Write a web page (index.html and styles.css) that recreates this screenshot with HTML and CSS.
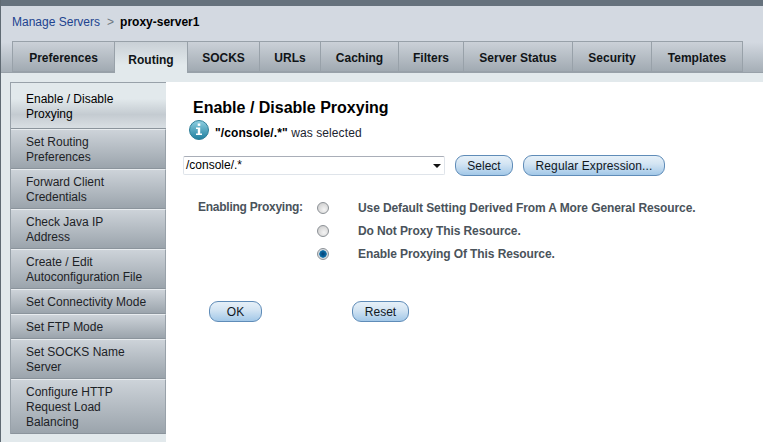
FILE: index.html
```html
<!DOCTYPE html>
<html lang="en">
<head>
    <meta charset="UTF-8">
    <title>Routing - proxy-server1</title>
    <link rel="stylesheet" href="styles.css">
</head>
<body>
    <div class="topbar"></div>
    <div class="header">
        <div class="breadcrumb">
            <a href="#">Manage Servers</a>
            <span class="sep">&gt;</span>
            <b>proxy-server1</b>
        </div>
        <div class="tabs">
            <a class="tab tab-pref" href="#">Preferences</a>
            <a class="tab tab-routing active" href="#">Routing</a>
            <a class="tab tab-socks" href="#">SOCKS</a>
            <a class="tab tab-urls" href="#">URLs</a>
            <a class="tab tab-caching" href="#">Caching</a>
            <a class="tab tab-filters" href="#">Filters</a>
            <a class="tab tab-status" href="#">Server Status</a>
            <a class="tab tab-security" href="#">Security</a>
            <a class="tab tab-templates" href="#">Templates</a>
        </div>
    </div>
    <div class="main">
        <div class="sidebar">
            <a class="side-item active" href="#">Enable / Disable Proxying</a>
            <a class="side-item" href="#">Set Routing Preferences</a>
            <a class="side-item" href="#">Forward Client Credentials</a>
            <a class="side-item" href="#">Check Java IP Address</a>
            <a class="side-item" href="#">Create / Edit Autoconfiguration File</a>
            <a class="side-item" href="#">Set Connectivity Mode</a>
            <a class="side-item" href="#">Set FTP Mode</a>
            <a class="side-item" href="#">Set SOCKS Name Server</a>
            <a class="side-item" href="#">Configure HTTP Request Load Balancing</a>
        </div>
        <div class="content">
            <h1>Enable / Disable Proxying</h1>
            <div class="message">
                <svg class="info-icon" width="20" height="20" viewBox="0 0 20 20">
                    <defs>
                        <linearGradient id="infoFill" x1="0" y1="0" x2="0" y2="1">
                            <stop offset="0" stop-color="#8fd0e2"/>
                            <stop offset="1" stop-color="#1f7f9f"/>
                        </linearGradient>
                    </defs>
                    <circle cx="10" cy="10" r="9.5" fill="url(#infoFill)" stroke="#2f7f99"/>
                    <rect x="8.7" y="3.5" width="2.6" height="2.4" fill="#fff"/>
                    <path d="M7 7.5h4.2v6H13v1.6H7v-1.6h1.8V9.1H7z" fill="#fff"/>
                </svg>
                <span><b>"/console/.*"</b> was selected</span>
            </div>
            <div class="select-row">
                <div class="select-box">
                    <span>/console/.*</span>
                    <i class="caret"></i>
                </div>
                <button class="btn btn-select" type="button">Select</button>
                <button class="btn btn-regex" type="button">Regular Expression...</button>
            </div>
            <div class="proxy-form">
                <div class="form-label">Enabling Proxying:</div>
                <div class="options">
                    <label class="option"><span class="radio"></span>Use Default Setting Derived From A More General Resource.</label>
                    <label class="option"><span class="radio"></span>Do Not Proxy This Resource.</label>
                    <label class="option"><span class="radio checked"></span>Enable Proxying Of This Resource.</label>
                </div>
            </div>
            <div class="form-buttons">
                <button class="btn btn-ok" type="button">OK</button>
                <button class="btn btn-reset" type="button">Reset</button>
            </div>
        </div>
    </div>
</body>
</html>
```

FILE: styles.css
```css
html, body {
    height: 100%;
}
body {
    margin: 0;
    height: 442px;
    overflow: hidden;
    font-family: "Liberation Sans", Arial, sans-serif;
    font-size: 12px;
    color: #000;
    background: #e2e9ec;
    border-left: 1px solid #5f6a73;
    box-sizing: border-box;
}
a {
    text-decoration: none;
    color: inherit;
}
.topbar {
    height: 6px;
    background: #66727d;
}
.header {
    height: 67px;
    padding-left: 11px;
    box-sizing: border-box;
    background: linear-gradient(#d3d9e1 0, #d3d9e1 36px, #a5aeb6 66px);
    border-bottom: 1px solid #98a1a9;
    display: flex;
    flex-direction: column;
}
.breadcrumb {
    height: 36px;
    padding-top: 9px;
    box-sizing: border-box;
    display: flex;
    gap: 7px;
}
.breadcrumb a {
    color: #21438f;
}
.breadcrumb .sep {
    color: #6d7680;
}
.breadcrumb b {
    margin-left: -1px;
}
.tabs {
    display: flex;
    height: 31px;
}
.tab {
    box-sizing: border-box;
    height: 31px;
    line-height: 31px;
    padding-top: 1px;
    text-align: center;
    font-weight: bold;
    color: #101417;
    border: 1px solid #98a1a9;
    border-left-width: 0;
    background: linear-gradient(#cbd1d8, #a1aab2);
}
.tab-pref {
    border-left-width: 1px;
    width: 103px;
}
.tab-routing { width: 73px; }
.tab-socks { width: 72px; }
.tab-urls { width: 61px; }
.tab-caching { width: 78px; }
.tab-filters { width: 65px; }
.tab-status { width: 109px; }
.tab-security { width: 79px; }
.tab-templates { width: 91px; }
.tab.active {
    height: 32px;
    line-height: 34px;
    border-bottom: none;
    position: relative;
    background: linear-gradient(#c9d0d6, #e2e9ec 75%);
}
.main {
    display: flex;
    padding-top: 9px;
}
.sidebar {
    width: 156px;
    margin-left: 9px;
    border-top: 1px solid #98a1a9;
    border-left: 1px solid #98a1a9;
    box-sizing: border-box;
    flex-shrink: 0;
    align-self: flex-start;
}
.side-item {
    display: block;
    box-sizing: border-box;
    padding: 5px 18px 3px 15px;
    line-height: 15px;
    color: #1d2226;
    border-bottom: 1px solid #8b949c;
    border-top: 1px solid #e8ecef;
    border-right: 1px solid #98a1a9;
    background: linear-gradient(#cdd3d9, #9ba4ac);
}
.side-item.active {
    padding-top: 9px;
    padding-bottom: 6px;
    border-top: none;
    border-right: none;
    margin-right: -1px;
    color: #000;
    background: linear-gradient(#e2e9ec 0, #e2e9ec 35%, #c4cbd1 70%, #d9dfe3 100%);
}
.content {
    flex: 1;
    background: #fff;
    height: 360px;
    padding: 16px 0 0 17px;
}
h1 {
    margin: 0 0 0 10px;
    font-size: 16px;
    line-height: 20px;
    font-weight: bold;
}
.message {
    display: flex;
    align-items: flex-end;
    gap: 6px;
    margin-left: 6px;
    height: 22px;
    color: #1b2430;
    letter-spacing: 0.1px;
}
.message span {
    line-height: 15px;
    position: relative;
    top: 1px;
}
.info-icon {
    display: block;
}
.message b {
    color: #000;
}
.select-row {
    display: flex;
    align-items: center;
    margin-top: 15px;
    height: 21px;
}
.select-box {
    box-sizing: border-box;
    width: 262px;
    height: 19px;
    line-height: 17px;
    padding-left: 2px;
    margin-right: 10px;
    border: 1px solid #dfe4ea;
    border-top-color: #a9aeb8;
    border-radius: 2px;
    position: relative;
}
.caret {
    position: absolute;
    right: 3px;
    top: 7px;
    border-left: 4px solid transparent;
    border-right: 4px solid transparent;
    border-top: 4px solid #111;
}
.btn {
    box-sizing: border-box;
    height: 21px;
    padding: 0;
    font-family: inherit;
    font-size: 12px;
    color: #10181f;
    border: 1px solid #5f8cb8;
    border-radius: 9px;
    background: linear-gradient(#e6f0f8 0, #d4e5f3 40%, #a3c8e8 100%);
}
.btn-select {
    width: 58px;
    margin-right: 10px;
}
.btn-regex {
    width: 142px;
    letter-spacing: 0.1px;
}
.proxy-form {
    display: flex;
    margin-top: 20px;
    font-weight: bold;
    color: #4a535b;
}
.form-label {
    width: 134px;
    padding-left: 15px;
    box-sizing: border-box;
    line-height: 23px;
    letter-spacing: -0.25px;
    flex-shrink: 0;
}
.options {
    display: flex;
    flex-direction: column;
    letter-spacing: -0.1px;
}
.option {
    display: flex;
    align-items: center;
    height: 23px;
}
.radio {
    box-sizing: border-box;
    width: 12px;
    height: 12px;
    margin-right: 29px;
    border-radius: 50%;
    border: 1px solid #8c9196;
    background: radial-gradient(circle at 60% 65%, #f4f4f4, #c6c6c6);
}
.radio.checked {
    background: radial-gradient(circle, #063f74 0, #0b6fa8 48%, #cfd6dc 56%, #eef0f2 100%);
}
.form-buttons {
    display: flex;
    margin-top: 36px;
    padding-left: 26px;
}
.btn-ok {
    width: 53px;
    margin-right: 90px;
}
.btn-reset {
    width: 57px;
}
```
